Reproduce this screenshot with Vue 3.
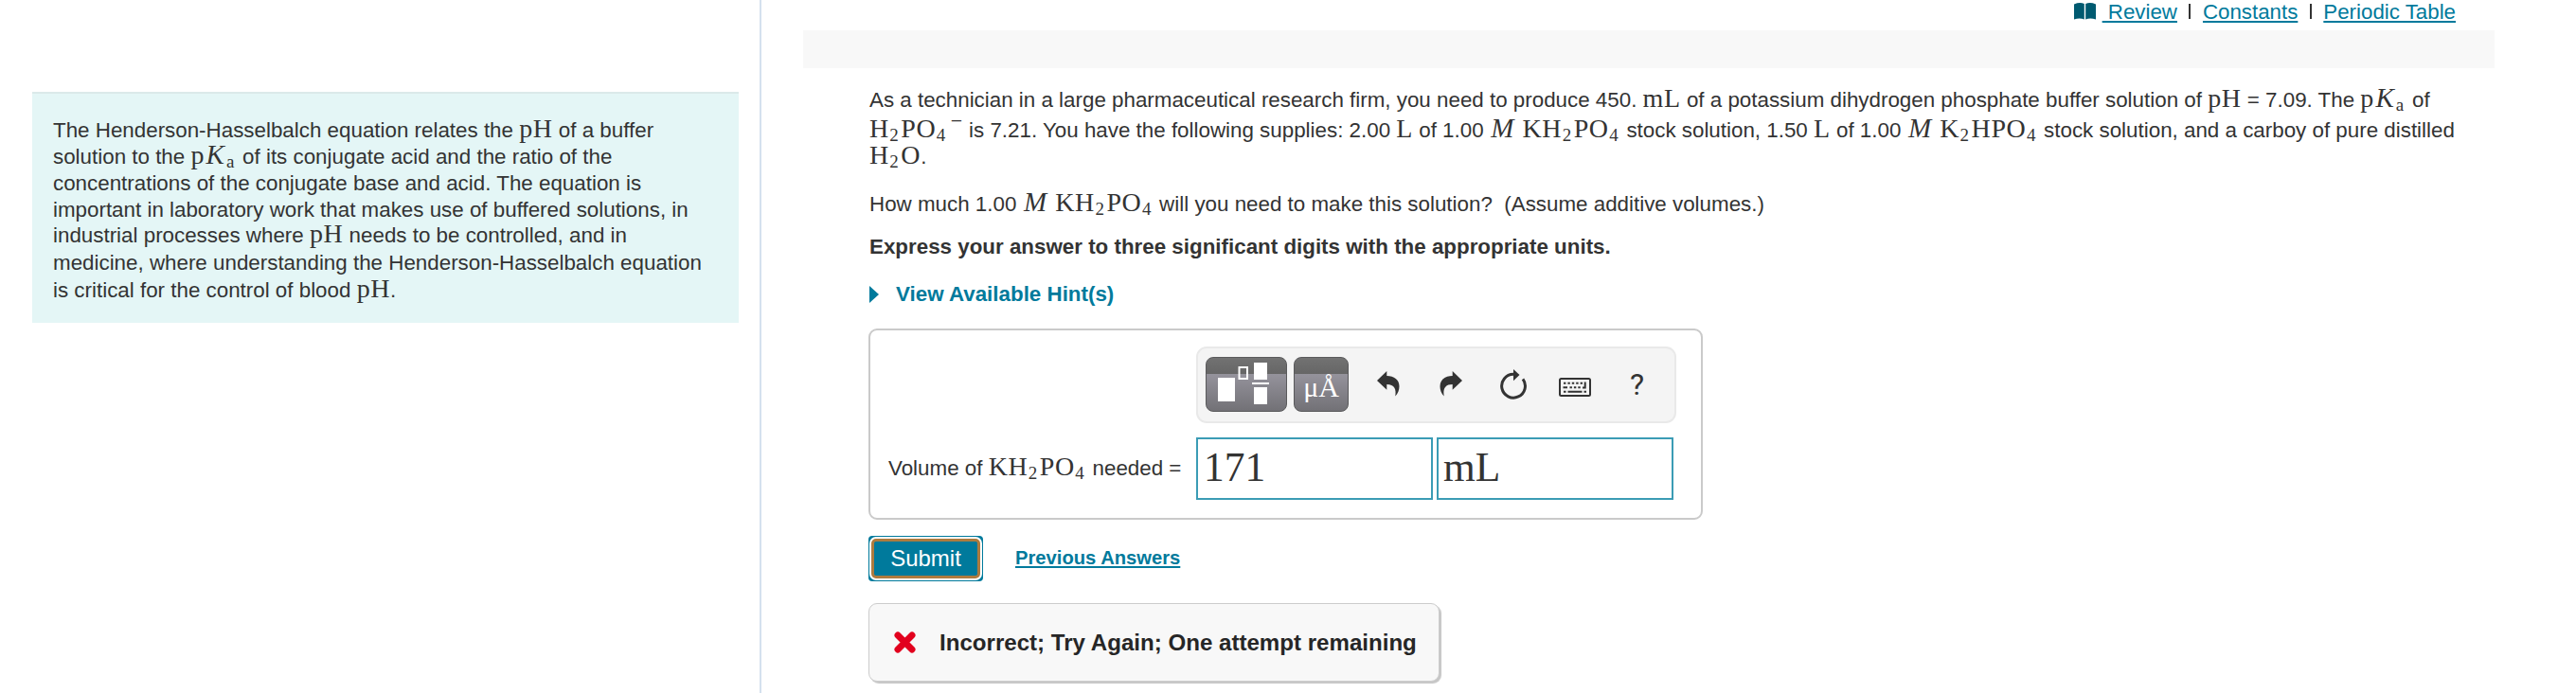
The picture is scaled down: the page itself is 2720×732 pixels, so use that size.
<template>
  <div class="page">
    <aside class="side-panel">
      <div class="intro">
        <p class="line">The Henderson-Hasselbalch equation relates the <span class="math">pH</span> of a buffer</p>
        <p class="line">solution to the <span class="math">p<i>K</i><sub>a</sub></span> of its conjugate acid and the ratio of the</p>
        <p class="line i3">concentrations of the conjugate base and acid. The equation is</p>
        <p class="line">important in laboratory work that makes use of buffered solutions, in</p>
        <p class="line i5">industrial processes where <span class="math">pH</span> needs to be controlled, and in</p>
        <p class="line i6">medicine, where understanding the Henderson-Hasselbalch equation</p>
        <p class="line">is critical for the control of blood <span class="math">pH</span>.</p>
      </div>
    </aside>

    <main class="content">
      <nav class="links">
        <svg class="book" viewBox="0 0 23 18">
          <path d="M0 1.5Q6 -1 10.8 1V17.5Q6 15.500 0 17.500ZM12.200 1Q17 -1 23 1.500V17.500Q17 15.500 12.200 17.500Z" />
        </svg>
        <a href="#">&nbsp;Review</a>
        <span class="sep"></span>
        <a href="#">Constants</a>
        <span class="sep"></span>
        <a href="#">Periodic Table</a>
      </nav>
      <div class="band"></div>

      <section class="problem">
        <p class="line">As a technician in a large pharmaceutical research firm, you need to produce 450. <span class="math liter">mL</span> of a potassium dihydrogen phosphate buffer solution of <span class="math">pH</span> = 7.09. The <span class="math">p<i>K</i><sub>a</sub></span> of</p>
        <p class="line q2"><span class="math">H<sub>2</sub>PO<sub>4</sub><sup>−</sup></span> is 7.21. You have the following supplies: 2.00 <span class="math liter">L</span> of 1.00 <span class="math"><i>M</i></span> <span class="math">KH<sub>2</sub>PO<sub>4</sub></span> stock solution, 1.50 <span class="math liter">L</span> of 1.00 <span class="math"><i>M</i></span> <span class="math">K<sub>2</sub>HPO<sub>4</sub></span> stock solution, and a carboy of pure distilled</p>
        <p class="line"><span class="math">H<sub>2</sub>O</span>.</p>
        <p class="line q4">How much 1.00 <span class="math"><i>M</i></span> <span class="math">KH<sub>2</sub>PO<sub>4</sub></span> will you need to make this solution?&nbsp; (Assume additive volumes.)</p>
        <p class="line q5">Express your answer to three significant digits with the appropriate units.</p>
        <div class="hints">
          <span class="triangle"></span>
          <b class="line">View Available Hint(s)</b>
        </div>

        <div class="answer-card">
          <div class="toolbar">
            <button class="tool templates">
              <svg viewBox="1 1 84 56">
                <path class="solid" d="M13 22h18v25H13zM51 6h14v18H51zM51 32h14v18H51zM49 27h18v2H49z" />
                <path class="outline" d="M35.500 11h8.500v12h-8.500z" />
              </svg>
            </button>
            <button class="tool units">μÅ</button>
            <svg class="icon undo" viewBox="0 0 24 27">
              <path d="M0 10L10.300 0V5C18 5 23.500 9 23.500 16C23.500 20 22 23.500 19.300 26.500C20.500 19 18.500 14 10.300 14V19.700Z" />
            </svg>
            <svg class="icon redo" viewBox="0 0 24 27">
              <path d="M24 10L13.700 0V5C6 5 0.500 9 0.500 16C0.500 20 2 23.500 4.700 26.500C3.500 19 5.500 14 13.700 14V19.700Z" />
            </svg>
            <svg class="icon reset" viewBox="0 0 28 32">
              <path class="ring" d="M14 5.300A12.400 12.400 0 1 0 24 10.300" />
              <path d="M14 0L20.500 6L14 12.300Z" />
            </svg>
            <svg class="icon keyboard" viewBox="0 0 34 20">
              <rect class="frame" x="1" y="1" width="32" height="18" rx="1.500" />
              <path class="keys" d="M5 5.700H25.500M11.500 10.300H24" />
              <path class="bars" d="M4.500 10.300H9M5 14.700H7.500M9.500 14.700H24.500M26.500 14.700H29M27.700 4.500V10.500H25" />
            </svg>
            <span class="help">?</span>
          </div>
          <div class="answer-row">
            <label class="line">Volume of <span class="math">KH<sub>2</sub>PO<sub>4</sub></span> needed =</label>
            <div class="field">{{ value }}</div>
            <div class="field unit">{{ unit }}</div>
          </div>
        </div>

        <div class="actions">
          <button class="submit"><span>Submit</span></button>
          <a href="#" class="previous">Previous Answers</a>
        </div>

        <div class="feedback">
          <svg class="cross" viewBox="0 0 23 23"><path d="M4 4L19 19M19 4L4 19" /></svg>
          <span class="message">Incorrect; Try Again; One attempt remaining</span>
        </div>
      </section>
    </main>
  </div>
</template>

<script setup>
import { ref } from 'vue'

const value = ref('171')
const unit = ref('mL')
</script>

<style>
body {
  background: #fff;
}
</style>

<style scoped>
.page {
  display: flex;
  width: 2720px;
  height: 732px;
  overflow: hidden;
  font-family: 'Liberation Sans', Arial, sans-serif;
  font-size: 22.37px;
  color: #333;
}

.side-panel {
  box-sizing: border-box;
  width: 804px;
  padding: 97px 0 0 34px;
  border-right: 2px solid #d5e1ee;
}

.intro {
  box-sizing: border-box;
  width: 746px;
  height: 244px;
  padding: 24.8px 22px 0;
  background: #e4f6f6;
  border-top: 2px solid #dbe9e9;
}

.line {
  width: fit-content;
  height: 28.2px;
  margin: 0;
  line-height: 28.2px;
  white-space: nowrap;
}

.i3,
.i5 {
  margin-top: -0.6px;
}

.i6 {
  margin-top: 0.8px;
}

/* formulas */
.math {
  font-family: 'Liberation Serif', 'Times New Roman', serif;
  font-size: 28px;
  line-height: 0;
  letter-spacing: 0.6px;
}

.math i {
  margin-left: 1.5px;
  font-size: 29px;
  letter-spacing: 2.8px;
}

.math sub,
.math sup {
  font-size: 19px;
  line-height: 0;
}

.math sub {
  margin: 0 1.9px 0 0.5px;
  vertical-align: -4px;
}

.math i + sub {
  margin-left: -0.8px;
}

.math sup {
  margin-left: 3px;
  font-size: 22px;
  vertical-align: 10px;
}

a {
  color: #007a9c;
  text-decoration: underline;
}

.content {
  flex: 1;
  padding-left: 44px;
}

.links {
  display: flex;
  align-items: flex-start;
  justify-content: flex-end;
  height: 32px;
  padding-right: 127px;
  font-size: 22.3px;
  line-height: 25px;
}

.book {
  width: 23px;
  height: 18px;
  margin: 3px 7px 0 0;
  fill: #005a70;
}

.sep {
  width: 2px;
  height: 16px;
  margin: 4px 12.5px 0;
  background: #333;
}

.band {
  width: 1786px;
  height: 40px;
  background: #f8f8f8;
}

.problem {
  padding: 19.5px 0 0 70px;
}

.q2 {
  margin-top: 4.5px;
}

.q4 {
  margin-top: 21px;
}

.q5 {
  margin-top: 17px;
  font-weight: bold;
}

.hints {
  display: flex;
  align-items: center;
  margin-top: 22px;
  color: #007a9c;
}

.triangle {
  width: 0;
  height: 0;
  margin-right: 18px;
  border: 9px solid transparent;
  border-left: 10px solid #007a9c;
  border-right: 0;
}

.answer-card {
  box-sizing: border-box;
  width: 881px;
  height: 202px;
  margin: 21.8px 0 0 -1px;
  padding: 17px 0 0 19px;
  border: 2px solid #cacaca;
  border-radius: 9px;
}

.toolbar {
  box-sizing: border-box;
  display: flex;
  align-items: center;
  width: 507px;
  height: 81px;
  margin-left: 325px;
  padding: 0 9px 1px 8px;
  background: #f4f4f4;
  border: 2px solid #e9e9e9;
  border-radius: 11px;
}

.tool {
  flex: none;
  box-sizing: border-box;
  height: 58px;
  padding: 0;
  border: 1px solid #5a5a5c;
  border-radius: 8px;
  background: linear-gradient(#727272 0, #666 17px, #95939c 17px, #727176 100%);
  color: #fff;
}

.templates {
  width: 86px;
  margin-right: 7px;
}

.templates svg {
  display: block;
  width: 84px;
  height: 56px;
}

.solid {
  fill: #fff;
}

.outline {
  fill: none;
  stroke: #fff;
  stroke-width: 2;
}

.units {
  width: 58px;
  padding-top: 6px;
  font: 30px/50px 'Liberation Serif', serif;
}

.icon {
  flex: none;
  fill: #333;
}

.undo {
  width: 24px;
  height: 27px;
  margin-left: 30px;
}

.redo {
  width: 24px;
  height: 27px;
  margin-left: 42px;
}

.reset {
  width: 28px;
  height: 32px;
  margin-left: 40px;
}

.ring {
  fill: none;
  stroke: #333;
  stroke-width: 3;
}

.keyboard {
  width: 34px;
  height: 20px;
  margin: 7px 0 0 34px;
}

.frame {
  fill: none;
  stroke: #333;
  stroke-width: 2;
}

.keys {
  fill: none;
  stroke: #333;
  stroke-width: 2;
  stroke-dasharray: 2.4 2;
}

.bars {
  fill: none;
  stroke: #333;
  stroke-width: 2;
}

.help {
  margin-left: 41px;
  font-family: Roboto, sans-serif;
  font-size: 32px;
}

.answer-row {
  display: flex;
  align-items: center;
  margin-top: 15px;
}

.answer-row .line {
  width: 325px;
}

.field {
  box-sizing: border-box;
  width: 250px;
  height: 66px;
  margin-right: 4px;
  padding-left: 6px;
  border: 2px solid #3b9cb5;
  font: 43.4px/58px 'Liberation Serif', serif;
}

.unit {
  padding-left: 5px;
}

.actions {
  display: flex;
  align-items: center;
  margin: 17px 0 0 -1px;
}

.submit {
  box-sizing: border-box;
  width: 121px;
  height: 48px;
  padding: 3px;
  border: 0;
  border-radius: 4px;
  background: #007a9c;
}

.submit span {
  display: block;
  box-sizing: border-box;
  height: 42px;
  border: 3px solid #ad7b3f;
  border-radius: 5px;
  background: #007a9c;
  box-shadow: 0 0 0 2px #fff;
  color: #fff;
  font: 24px/35px 'Liberation Sans', sans-serif;
}

.previous {
  margin-left: 34px;
  font-size: 20.2px;
  font-weight: bold;
}

.feedback {
  box-sizing: border-box;
  display: flex;
  align-items: center;
  width: 603px;
  height: 83px;
  margin: 23px 0 0 -1px;
  padding-left: 26px;
  background: #f8f8f8;
  border: 1px solid #ccc;
  border-radius: 9px;
  box-shadow: 2px 2px 1px #c6c6c6;
}

.cross {
  width: 23px;
  height: 23px;
  margin-right: 25px;
  fill: none;
  stroke: #e2001e;
  stroke-width: 7;
  stroke-linecap: round;
}

.message {
  padding-top: 2px;
  font-size: 24.1px;
  font-weight: bold;
  color: #262626;
}
</style>
